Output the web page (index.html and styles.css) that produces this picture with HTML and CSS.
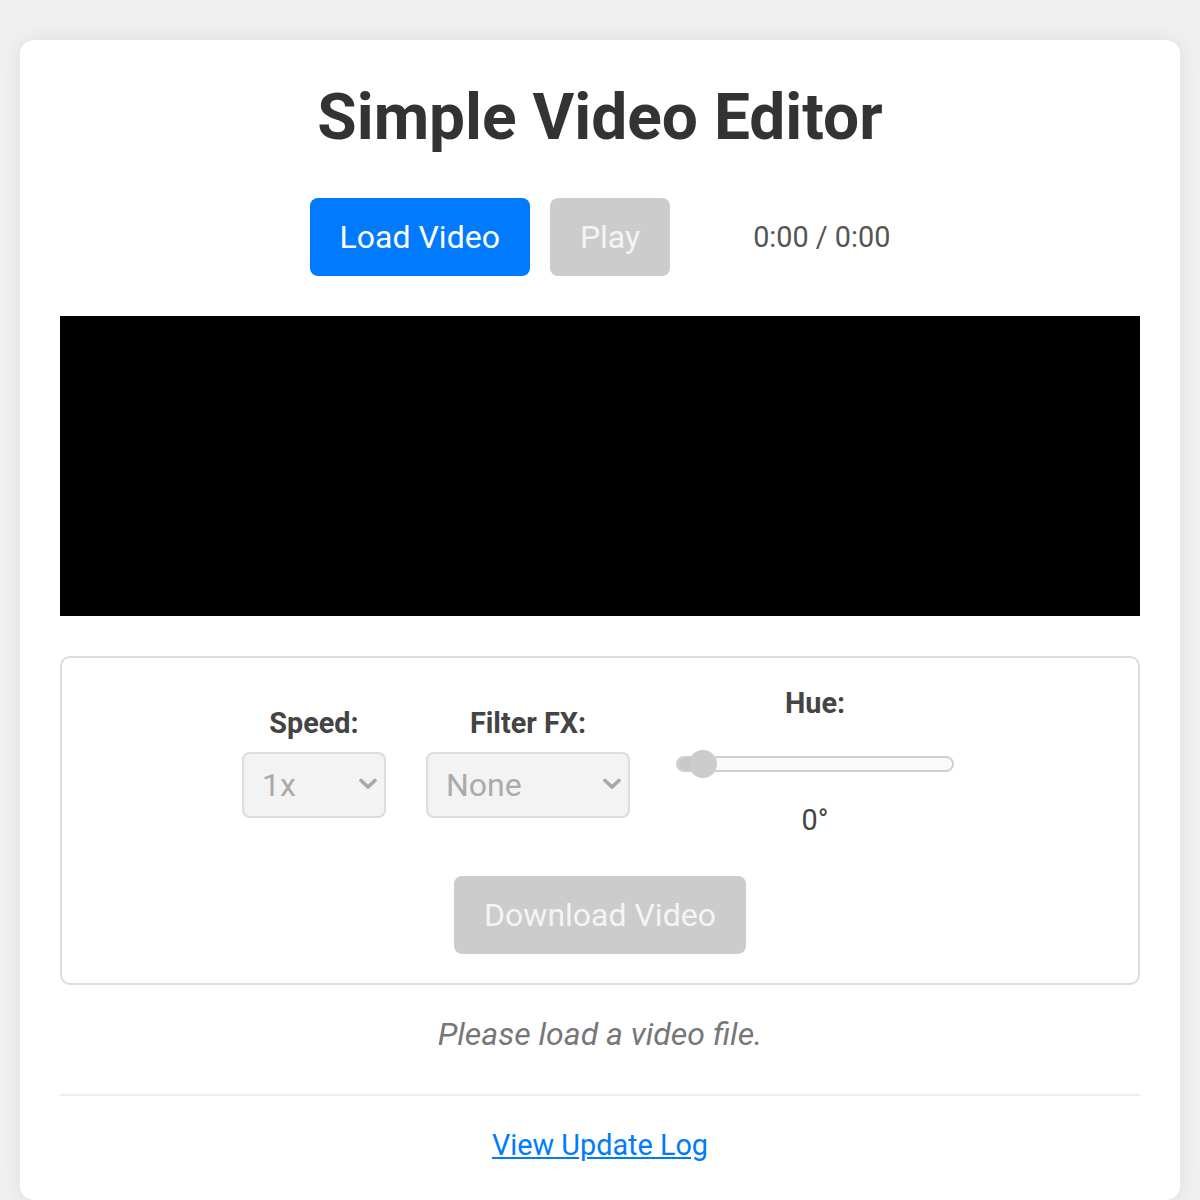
FILE: index.html
```html
<!DOCTYPE html>
<html lang="en">
<head>
<meta charset="utf-8">
<title>Simple Video Editor</title>
<link rel="stylesheet" href="styles.css">
</head>
<body>
<div class="card">
  <h1 class="title">Simple Video Editor</h1>
  <div class="toolbar">
    <button class="btn btn-primary">Load Video</button>
    <button class="btn btn-disabled" disabled>Play</button>
    <span class="time">0:00 / 0:00</span>
  </div>
  <div class="video"></div>
  <div class="panel">
    <div class="controls">
      <div class="group">
        <label class="label">Speed:</label>
        <div class="select select-speed">
          <span class="select-text">1x</span>
          <svg class="chevron" width="18" height="12" viewBox="0 0 18 12"><path d="M2 2.5 L9 9 L16 2.5" fill="none" stroke="#a8a8a8" stroke-width="3.6" stroke-linecap="round" stroke-linejoin="round"/></svg>
        </div>
      </div>
      <div class="group">
        <label class="label">Filter FX:</label>
        <div class="select select-filter">
          <span class="select-text">None</span>
          <svg class="chevron" width="18" height="12" viewBox="0 0 18 12"><path d="M2 2.5 L9 9 L16 2.5" fill="none" stroke="#a8a8a8" stroke-width="3.6" stroke-linecap="round" stroke-linejoin="round"/></svg>
        </div>
      </div>
      <div class="group group-hue">
        <label class="label label-hue">Hue:</label>
        <div class="range">
          <div class="track"><div class="fill"></div></div>
          <div class="thumb"></div>
        </div>
        <span class="value">0°</span>
      </div>
    </div>
    <button class="btn btn-disabled btn-download" disabled>Download Video</button>
  </div>
  <p class="status">Please load a video file.</p>
  <hr class="divider">
  <div class="footer"><a class="link" href="#">View Update Log</a></div>
</div>
</body>
</html>
```

FILE: styles.css
```css
* { box-sizing: border-box; }
html, body {
  margin: 0;
  padding: 0;
  background: #f0f0f0;
  font-family: Roboto, "Liberation Sans", Arial, sans-serif;
}
.card {
  margin: 40px 20px 0;
  background: #fff;
  border-radius: 14px;
  box-shadow: 0 0 20px rgba(0,0,0,0.08);
  padding: 40px 40px 36px;
  min-height: 1160px;
}
.title {
  margin: 0;
  text-align: center;
  font-size: 64px;
  font-weight: 700;
  line-height: normal;
  color: #333;
}
.toolbar {
  margin-top: 43px;
  display: flex;
  justify-content: center;
  align-items: center;
  gap: 20px;
}
.btn {
  font-family: Roboto, "Liberation Sans", Arial, sans-serif;
  font-size: 32px;
  line-height: 38px;
  padding: 20px 30px;
  border: none;
  border-radius: 8px;
  color: #fff;
}
.btn-primary { background: #007bff; }
.btn-disabled { background: #cccccc; color: #f4f4f4; }
.time {
  margin-left: 63px;
  font-size: 28.8px;
  color: #555;
}
.video {
  margin-top: 40px;
  height: 300px;
  background: #000;
}
.panel {
  margin-top: 40px;
  border: 2px solid #ddd;
  border-radius: 10px;
  padding: 29px 30px;
  display: flex;
  flex-direction: column;
  align-items: center;
}
.controls {
  display: flex;
  align-items: center;
  justify-content: center;
  gap: 40px;
  padding-left: 2px;
}
.group {
  display: flex;
  flex-direction: column;
  align-items: center;
}
.group-hue { padding: 0 6px; }
.label {
  font-size: 28.8px;
  font-weight: 700;
  color: #444;
  line-height: 33px;
  margin-bottom: 12px;
}
.label-hue { margin-bottom: 0; }
.select {
  position: relative;
  height: 66px;
  border: 2px solid #dcdcdc;
  border-radius: 8px;
  background: #f3f3f3;
  padding: 0 18px;
  display: flex;
  align-items: center;
}
.select-speed { width: 144px; }
.select-filter { width: 204px; }
.select-text {
  font-size: 32px;
  color: #aaa;
}
.chevron {
  position: absolute;
  right: 7px;
  top: 24px;
}
.range {
  position: relative;
  width: 278px;
  height: 84px;
}
.track {
  position: absolute;
  left: 0;
  right: 0;
  top: 36px;
  height: 16px;
  border: 2px solid #cfcfcf;
  border-radius: 8px;
  background: #fafafa;
  overflow: hidden;
}
.fill {
  width: 26px;
  height: 100%;
  background: #c8c8c8;
}
.thumb {
  position: absolute;
  left: 13px;
  top: 30px;
  width: 28px;
  height: 28px;
  border-radius: 50%;
  background: #cccccc;
}
.value {
  font-size: 28.8px;
  line-height: 33px;
  color: #444;
}
.btn-download { margin-top: 39px; }
.status {
  margin: 32px 0 0;
  text-align: center;
  font-size: 32px;
  line-height: 35px;
  font-style: italic;
  color: #777;
}
.divider {
  margin: 42px 0 0;
  border: none;
  border-top: 2px solid #eee;
  height: 0;
}
.footer {
  margin-top: 33px;
  text-align: center;
  font-size: 28.8px;
  line-height: 33px;
}
.link {
  color: #007bff;
  text-decoration: underline;
}
```
